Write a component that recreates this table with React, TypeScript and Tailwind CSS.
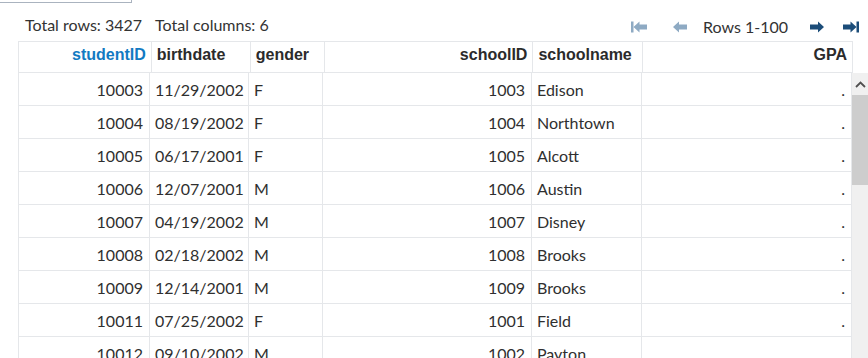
import React from "react"

const rows = [
  ["10003", "11/29/2002", "F", "1003", "Edison"],
  ["10004", "08/19/2002", "F", "1004", "Northtown"],
  ["10005", "06/17/2001", "F", "1005", "Alcott"],
  ["10006", "12/07/2001", "M", "1006", "Austin"],
  ["10007", "04/19/2002", "M", "1007", "Disney"],
  ["10008", "02/18/2002", "M", "1008", "Brooks"],
  ["10009", "12/14/2001", "M", "1009", "Brooks"],
  ["10011", "07/25/2002", "F", "1001", "Field"],
  ["10012", "09/10/2002", "M", "1002", "Payton"],
]

const headerCols = ["w-[133px]", "w-[99px]", "w-[74px]", "w-[209px]", "w-[110px]", "w-[210px]"]
const bodyCols = ["w-[131px]", "w-[99px]", "w-[74px]", "w-[209px]", "w-[110px]", "w-[210px]"]
const rightAligned = [true, false, false, true, false, true]

function ArrowIcon({ dir, bar, color }: { dir: "left" | "right"; bar?: boolean; color: string }) {
  return (
    <svg width="16" height="12" viewBox="0 0 16 12" className={dir === "right" ? "-scale-x-100" : ""}>
      {bar && <rect x="0" y="0.5" width="2.5" height="11" fill={color} />}
      <path
        d={bar ? "M2.5 6 L8.5 0.5 L8.5 3.5 L16 3.5 L16 8.5 L8.5 8.5 L8.5 11.5 Z" : "M1 6 L7 0.5 L7 3.5 L15 3.5 L15 8.5 L7 8.5 L7 11.5 Z"}
        fill={color}
      />
    </svg>
  )
}

export default function App() {
  const headers = ["studentID", "birthdate", "gender", "schoolID", "schoolname", "GPA"]

  return (
    <div className="w-[868px] h-[358px] overflow-hidden bg-white text-[#333] relative">
      {/* leftover box from the panel above */}
      <div className="w-[132px] h-[3px] border-r border-b border-[#aab3bf]" />

      {/* Toolbar */}
      <div className="h-[38px] flex items-end pb-[6px] pl-[25px] pr-[9px] font-['Lato',sans-serif] text-[16px] leading-[20px]">
        <span>Total rows: 3427</span>
        <span className="ml-[13px]">Total columns: 6</span>
        <div className="ml-auto flex items-center mb-[-2px]">
          <ArrowIcon dir="left" bar color="#8eaac3" />
          <span className="ml-[25px]" />
          <ArrowIcon dir="left" color="#8eaac3" />
          <span className="ml-[15px]">Rows 1-100</span>
          <span className="ml-[21px]" />
          <ArrowIcon dir="right" color="#1c4d79" />
          <span className="ml-[18px]" />
          <ArrowIcon dir="right" bar color="#1c4d79" />
        </div>
      </div>

      {/* Table */}
      <div className="ml-[18px] w-[850px]">
        {/* Header */}
        <div className="flex h-[32px] border-t border-b border-l border-[#e5e7ea] w-[835px] font-['Liberation_Sans',Arial,sans-serif] font-bold text-[16px]">
          {headers.map((h, i) => (
            <div
              key={h}
              className={`${headerCols[i]} border-r border-[#e5e7ea] px-[5px] pt-[1px] ${
                rightAligned[i] ? "text-right" : "text-left"
              } ${i === 0 ? "text-[#127ac2]" : "text-[#2b2b2b]"}`}
            >
              {h}
            </div>
          ))}
        </div>

        {/* Body + scrollbar */}
        <div className="flex">
          <div className="w-[834px] border-l border-[#e5e7ea] font-['Lato',sans-serif] text-[16px] text-[#2f2f2f]">
            {rows.map((r) => (
              <div key={r[0]} className="flex h-[33px] border-b border-[#e5e7ea]">
                {[...r, "."].map((c, i) => (
                  <div
                    key={i}
                    className={`${bodyCols[i]} border-r border-[#e5e7ea] pr-[6px] pl-[5px] pt-[1px] flex items-center ${
                      rightAligned[i] ? "justify-end" : "justify-start"
                    }`}
                  >
                    {c}
                  </div>
                ))}
              </div>
            ))}
          </div>
          <div className="w-[16px] h-[285px] bg-[#f0f0f0] flex flex-col">
            <div className="h-[22px] flex items-center justify-center">
              <svg width="11" height="7" viewBox="0 0 11 7">
                <path d="M1 6 L5.5 1.5 L10 6" stroke="#505050" strokeWidth="1.8" fill="none" />
              </svg>
            </div>
            <div className="h-[90px] bg-[#cdcdcd]" />
          </div>
        </div>
      </div>
    </div>
  )
}
